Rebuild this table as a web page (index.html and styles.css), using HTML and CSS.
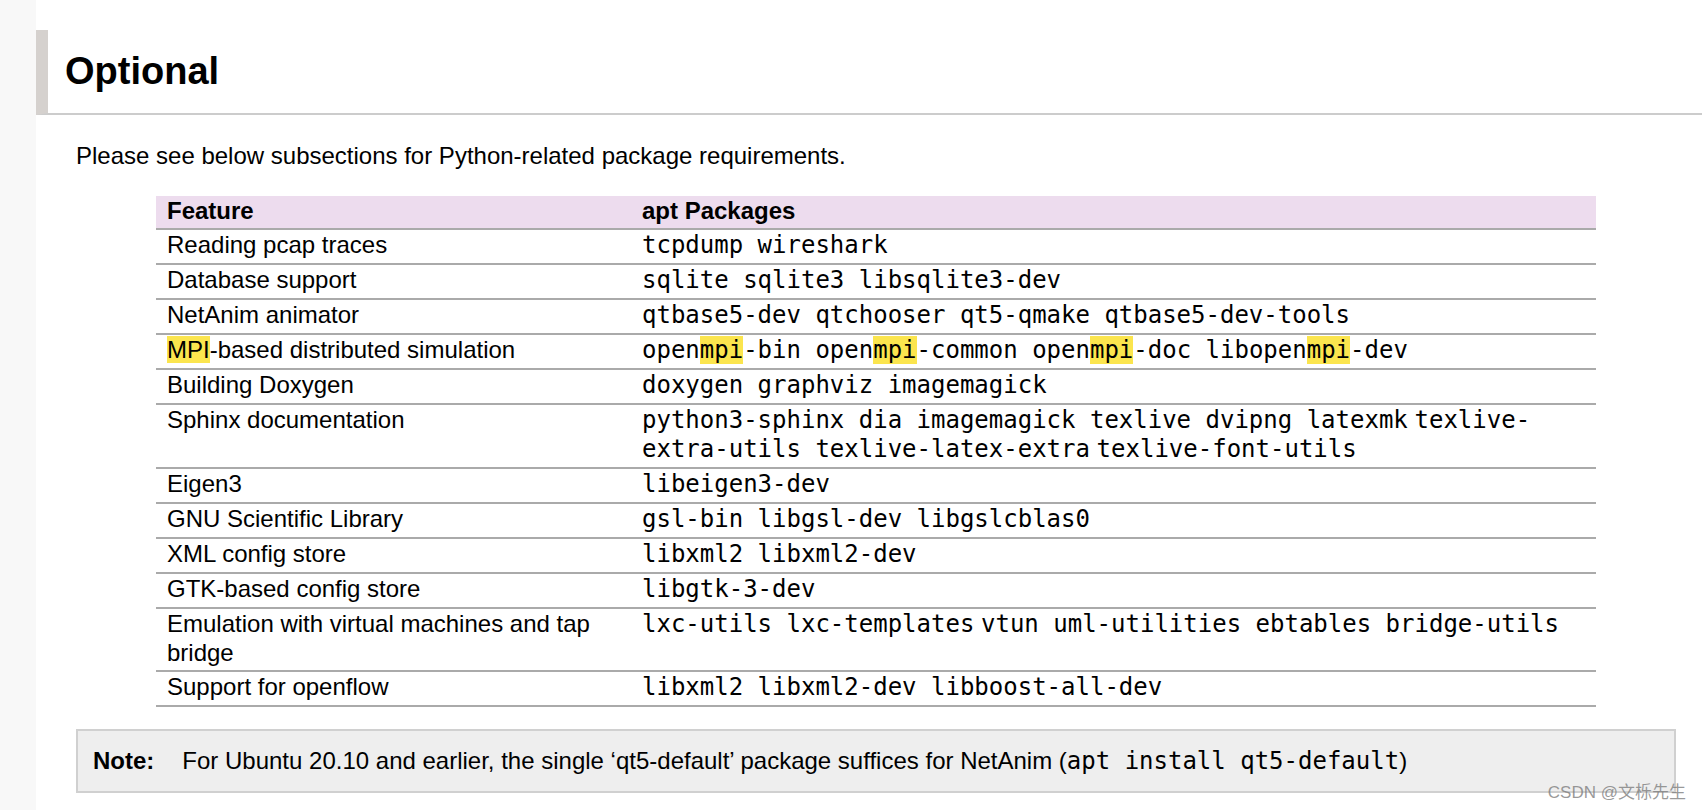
FILE: index.html
```html
<!DOCTYPE html>
<html lang="en">
<head>
<meta charset="utf-8">
<title>Optional</title>
<link rel="stylesheet" href="styles.css">
</head>
<body>
<div class="page">
  <aside class="sidebar"></aside>
  <main class="main">
    <h1 class="title">Optional</h1>
    <div class="content">
      <p class="intro">Please see below subsections for Python-related package requirements.</p>
      <table class="reqs">
        <colgroup><col class="c-feature"><col class="c-pkgs"></colgroup>
        <thead>
          <tr><th>Feature</th><th>apt Packages</th></tr>
        </thead>
        <tbody>
          <tr><td>Reading pcap traces</td><td><code>tcpdump wireshark</code></td></tr>
          <tr><td>Database support</td><td><code>sqlite sqlite3 libsqlite3-dev</code></td></tr>
          <tr><td>NetAnim animator</td><td><code>qtbase5-dev qtchooser qt5-qmake qtbase5-dev-tools</code></td></tr>
          <tr><td><span class="hl">MPI</span>-based distributed simulation</td><td><code>open<span class="hl">mpi</span>-bin open<span class="hl">mpi</span>-common open<span class="hl">mpi</span>-doc libopen<span class="hl">mpi</span>-dev</code></td></tr>
          <tr><td>Building Doxygen</td><td><code>doxygen graphviz imagemagick</code></td></tr>
          <tr><td>Sphinx documentation</td><td><code>python3-sphinx dia imagemagick texlive dvipng latexmk</code> <code>texlive-extra-utils texlive-latex-extra</code> <code>texlive-font-utils</code></td></tr>
          <tr><td>Eigen3</td><td><code>libeigen3-dev</code></td></tr>
          <tr><td>GNU Scientific Library</td><td><code>gsl-bin libgsl-dev libgslcblas0</code></td></tr>
          <tr><td>XML config store</td><td><code>libxml2 libxml2-dev</code></td></tr>
          <tr><td>GTK-based config store</td><td><code>libgtk-3-dev</code></td></tr>
          <tr><td>Emulation with virtual machines and tap bridge</td><td><code>lxc-utils lxc-templates</code> <code>vtun uml-utilities ebtables bridge-utils</code></td></tr>
          <tr><td>Support for openflow</td><td><code>libxml2 libxml2-dev libboost-all-dev</code></td></tr>
        </tbody>
      </table>
      <div class="note">
        <span class="note-title">Note:</span>
        <p class="note-body">For Ubuntu 20.10 and earlier, the single ‘qt5-default’ package suffices for NetAnim (<code>apt install qt5-default</code>)</p>
      </div>
    </div>
  </main>
</div>
<div class="watermark">CSDN @文栎先生</div>
</body>
</html>
```

FILE: styles.css
```css
html, body {
  margin: 0;
  padding: 0;
  height: 100%;
  overflow: hidden;
  background: #ffffff;
}

body {
  font-family: "Liberation Sans", Arial, sans-serif;
  font-size: 24px;
  color: #000000;
}

.page {
  display: flex;
  min-height: 100%;
}

.sidebar {
  flex: 0 0 36px;
  background: #f8f8f8;
}

.main {
  flex: 1 1 auto;
  min-width: 0;
}

.title {
  margin: 30px 0 0 0;
  padding: 20px 17px 20px 17px;
  border-left: 12px solid #d5d1ce;
  border-bottom: 2px solid #cccccc;
  font-size: 38px;
  font-weight: bold;
  line-height: normal;
}

.content {
  padding: 0 26px 0 40px;
}

.intro {
  margin: 27px 0 26px 0;
}

code {
  font-family: "DejaVu Sans Mono", monospace;
  font-size: 24px;
}

.reqs {
  width: 1440px;
  margin: 0 80px;
  border-collapse: collapse;
  table-layout: fixed;
}

.c-feature {
  width: 475px;
}

.reqs th,
.reqs td {
  text-align: left;
  vertical-align: top;
  line-height: 1.2;
  padding: 1px 10px 3px 11px;
  border-bottom: 2px solid #aaaaaa;
}

.reqs thead th {
  padding-bottom: 2px;
}

.reqs td code {
  line-height: 29px;
}

.reqs thead th {
  background: #eddcee;
  font-weight: bold;
}

.hl {
  background: #fbe54e;
}

.note {
  display: flex;
  gap: 28px;
  align-items: baseline;
  margin-top: 22px;
  padding: 16px 15px;
  background: #eeeeee;
  border: 2px solid #d0d0d0;
}

.note-title {
  font-weight: bold;
}

.note-body {
  margin: 0;
}

.watermark {
  position: absolute;
  right: 16px;
  bottom: 7px;
  font-family: "Liberation Sans", "Noto Sans CJK SC", sans-serif;
  font-size: 17px;
  color: rgba(120, 120, 120, 0.75);
}
```
